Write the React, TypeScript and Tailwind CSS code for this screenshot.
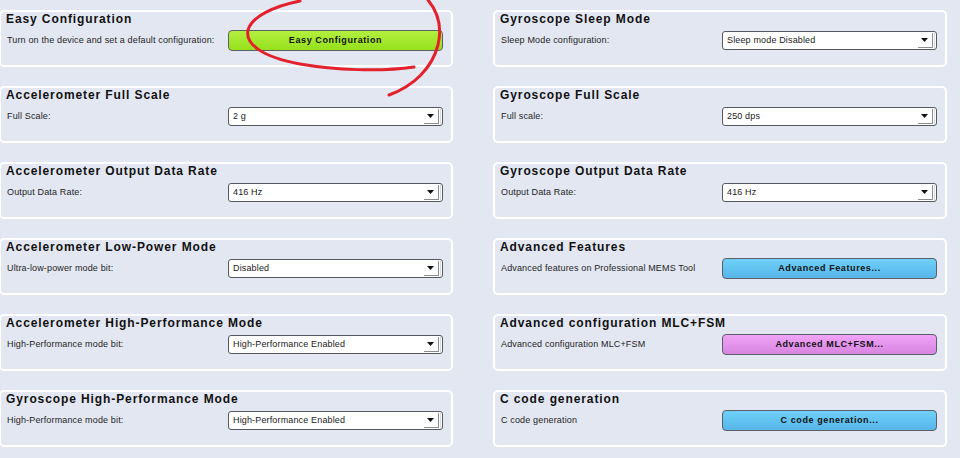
import React from "react";

type Ctrl =
  | { kind: "select"; value: string }
  | { kind: "button"; text: string; color: "green" | "blue" | "pink" };

interface Panel {
  title: string;
  label: string;
  ctrl: Ctrl;
}

const left: Panel[] = [
  { title: "Easy Configuration", label: "Turn on the device and set a default configuration:", ctrl: { kind: "button", text: "Easy Configuration", color: "green" } },
  { title: "Accelerometer Full Scale", label: "Full Scale:", ctrl: { kind: "select", value: "2 g" } },
  { title: "Accelerometer Output Data Rate", label: "Output Data Rate:", ctrl: { kind: "select", value: "416 Hz" } },
  { title: "Accelerometer Low-Power Mode", label: "Ultra-low-power mode bit:", ctrl: { kind: "select", value: "Disabled" } },
  { title: "Accelerometer High-Performance Mode", label: "High-Performance mode bit:", ctrl: { kind: "select", value: "High-Performance Enabled" } },
  { title: "Gyroscope High-Performance Mode", label: "High-Performance mode bit:", ctrl: { kind: "select", value: "High-Performance Enabled" } },
];

const right: Panel[] = [
  { title: "Gyroscope Sleep Mode", label: "Sleep Mode configuration:", ctrl: { kind: "select", value: "Sleep mode Disabled" } },
  { title: "Gyroscope Full Scale", label: "Full scale:", ctrl: { kind: "select", value: "250 dps" } },
  { title: "Gyroscope Output Data Rate", label: "Output Data Rate:", ctrl: { kind: "select", value: "416 Hz" } },
  { title: "Advanced Features", label: "Advanced features on Professional MEMS Tool", ctrl: { kind: "button", text: "Advanced Features...", color: "blue" } },
  { title: "Advanced configuration MLC+FSM", label: "Advanced configuration MLC+FSM", ctrl: { kind: "button", text: "Advanced MLC+FSM...", color: "pink" } },
  { title: "C code generation", label: "C code generation", ctrl: { kind: "button", text: "C code generation...", color: "blue" } },
];

function Select({ value }: { value: string }) {
  return (
    <div className="relative h-[19px] w-[215px] rounded-[3px] border border-[#555a60] bg-white">
      <span className="absolute left-[4px] top-[3px] text-[9px] leading-[11px] tracking-[0.15px] text-[#1a1a1a]">{value}</span>
      <svg className="absolute right-0 top-0" width="20" height="17" viewBox="0 0 20 17">
        <polygon points="5,6 12,6 8.5,10" fill="#111" />
        <line x1="2" y1="15.5" x2="17" y2="15.5" stroke="#8a8d92" strokeWidth="1" />
        <line x1="16.5" y1="1" x2="16.5" y2="16" stroke="#8a8d92" strokeWidth="1" />
        <line x1="18.5" y1="0" x2="18.5" y2="17" stroke="#d8dade" strokeWidth="1" />
      </svg>
    </div>
  );
}

function Button({ text, color }: { text: string; color: "green" | "blue" | "pink" }) {
  const cls =
    color === "green"
      ? "bg-gradient-to-b from-[#b3f03e] to-[#96e01a]"
      : color === "blue"
      ? "bg-gradient-to-b from-[#6fd0f8] to-[#56b6e9]"
      : "bg-gradient-to-b from-[#f0a4f6] to-[#d884e1]";
  return (
    <div className={`flex h-[21px] w-[215px] items-center justify-center rounded-[4px] border border-[#5c6066] ${cls}`}>
      <span className="text-[9px] font-bold leading-[11px] tracking-[0.6px] text-[#111]">{text}</span>
    </div>
  );
}

function PanelBox({ p }: { p: Panel }) {
  return (
    <div className="h-[57px] w-[454px] rounded-[5px] border-2 border-white pl-[5px] pr-[8px]">
      <div className="pt-[1px] text-[12px] font-bold leading-[13px] tracking-[0.9px] text-[#111]">{p.title}</div>
      <div className="mt-[4px] flex h-[20px] items-center">
        <div className="flex-1 pl-[1px] text-[9px] leading-[11px] tracking-[0.15px] text-[#1e1e1e]">{p.label}</div>
        {p.ctrl.kind === "select" ? <Select value={p.ctrl.value} /> : <Button text={p.ctrl.text} color={p.ctrl.color} />}
      </div>
    </div>
  );
}

export default function App() {
  return (
    <div
      className="relative h-[458px] w-[960px] overflow-hidden bg-[#e3e7f2]"
      style={{ fontFamily: '"Liberation Sans", Arial, sans-serif' }}
    >
      <div className="flex gap-[40px] pt-[10px]">
        <div className="-ml-[1px] flex flex-col gap-[19px]">
          {left.map((p) => (
            <PanelBox key={p.title} p={p} />
          ))}
        </div>
        <div className="flex flex-col gap-[19px]">
          {right.map((p) => (
            <PanelBox key={p.title} p={p} />
          ))}
        </div>
      </div>
      <svg className="pointer-events-none absolute left-0 top-0" width="960" height="458" viewBox="0 0 960 458">
        <path
          d="M300 1 C 275 6, 252 16, 248 30 C 245 44, 262 57, 300 64 C 335 70, 380 72, 414 67"
          fill="none"
          stroke="#e3212d"
          strokeWidth="3"
          strokeLinecap="round"
        />
        <path
          d="M428 0 C 438 12, 442 28, 438 45 C 432 68, 414 86, 389 95"
          fill="none"
          stroke="#e3212d"
          strokeWidth="3"
          strokeLinecap="round"
        />
      </svg>
    </div>
  );
}
